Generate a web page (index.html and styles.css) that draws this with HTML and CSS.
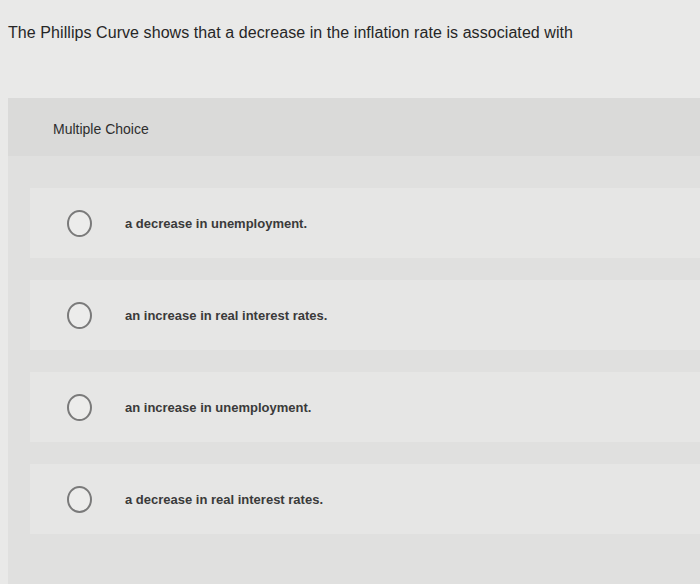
FILE: index.html
```html
<!DOCTYPE html>
<html>
<head>
<meta charset="utf-8">
<link rel="stylesheet" href="styles.css">
</head>
<body>
<div class="page">
  <p class="question">The Phillips Curve shows that a decrease in the inflation rate is associated with</p>
  <section class="panel">
    <div class="panel-head">Multiple Choice</div>
    <ul class="options">
      <li class="option"><span class="radio"></span><span class="label">a decrease in unemployment.</span></li>
      <li class="option"><span class="radio"></span><span class="label">an increase in real interest rates.</span></li>
      <li class="option"><span class="radio"></span><span class="label">an increase in unemployment.</span></li>
      <li class="option"><span class="radio"></span><span class="label">a decrease in real interest rates.</span></li>
    </ul>
  </section>
</div>
</body>
</html>
```
FILE: styles.css
```css
html, body {
  margin: 0;
  padding: 0;
}
body {
  background: #e9e9e8;
  font-family: "Liberation Sans", Arial, sans-serif;
  color: #2a2a2a;
  width: 700px;
  height: 584px;
  overflow: hidden;
}
.page {
  padding-top: 24px;
}
.question {
  margin: 0 0 0 8px;
  font-size: 16px;
  line-height: 18px;
  letter-spacing: 0.07px;
  color: #262626;
}
.panel {
  margin: 56px 0 0 8px;
  background: #e0e0df;
  padding-bottom: 50px;
}
.panel-head {
  background: #dadad9;
  height: 58px;
  padding-left: 45px;
  font-size: 14px;
  line-height: 62px;
  color: #2e2e2e;
}
.options {
  list-style: none;
  margin: 0;
  padding: 32px 0 0 22px;
  display: flex;
  flex-direction: column;
  gap: 22px;
}
.option {
  background: #e6e6e5;
  height: 70px;
  display: flex;
  align-items: center;
  padding-left: 37px;
}
.radio {
  width: 21px;
  height: 23px;
  border: 2px solid #7a7a7a;
  border-radius: 50%;
  background: #ececeb;
  flex: none;
}
.label {
  margin-left: 33px;
  font-size: 13px;
  font-weight: bold;
  color: #3a3a3a;
  letter-spacing: 0;
}
```
